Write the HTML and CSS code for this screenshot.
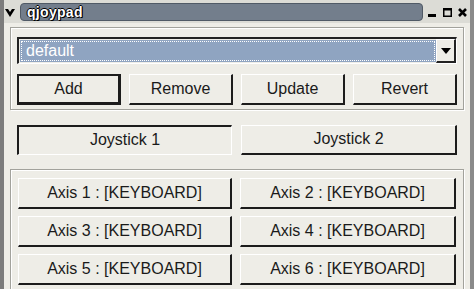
FILE: index.html
```html
<!DOCTYPE html>
<html>
<head>
<meta charset="utf-8">
<link rel="stylesheet" href="styles.css">
</head>
<body>
<div class="window">
  <div class="titlebar">
    <svg class="menu" width="10" height="10" viewBox="0 0 10 10"><path d="M0 1 L3 1 L5 4 L7 1 L10 1 L5 9 Z" fill="#000"/></svg>
    <div class="title"><span class="title-text">qjoypad</span></div>
    <div class="wbtns">
      <svg width="9" height="9" viewBox="0 0 9 9"><rect x="0" y="6" width="8" height="3" fill="#000"/></svg>
      <svg width="9" height="9" viewBox="0 0 9 9"><rect x="0.75" y="0.75" width="7.5" height="7.5" fill="none" stroke="#000" stroke-width="1.5"/><rect x="0" y="0" width="9" height="2.5" fill="#000"/></svg>
      <svg width="9" height="9" viewBox="0 0 9 9"><path d="M1 1 L8 8 M8 1 L1 8" stroke="#000" stroke-width="2.6"/></svg>
    </div>
  </div>
  <div class="content">
    <div class="frame top-frame">
      <div class="combo">
        <div class="combo-field"><span>default</span></div>
        <div class="combo-arrow"><svg width="10" height="6" viewBox="0 0 10 6"><path d="M0 0 L10 0 L5 6 Z" fill="#000"/></svg></div>
      </div>
      <div class="btn-row">
        <div class="btn default-btn">Add</div>
        <div class="btn">Remove</div>
        <div class="btn">Update</div>
        <div class="btn">Revert</div>
      </div>
    </div>
    <div class="tabs">
      <div class="btn tab pressed">Joystick 1</div>
      <div class="btn tab">Joystick 2</div>
    </div>
    <div class="frame axis-frame">
      <div class="btn axis">Axis 1 : [KEYBOARD]</div>
      <div class="btn axis">Axis 2 : [KEYBOARD]</div>
      <div class="btn axis">Axis 3 : [KEYBOARD]</div>
      <div class="btn axis">Axis 4 : [KEYBOARD]</div>
      <div class="btn axis">Axis 5 : [KEYBOARD]</div>
      <div class="btn axis">Axis 6 : [KEYBOARD]</div>
    </div>
  </div>
</div>
</body>
</html>
```
FILE: styles.css
```css
html, body {
  margin: 0;
  padding: 0;
  background: #eeede7;
}
.window {
  width: 474px;
  height: 289px;
  overflow: hidden;
  box-sizing: border-box;
  border-left: 4px solid #7c7c7c;
  border-right: 4px solid #8a8a8a;
  background: #eeede7;
  font-family: "Liberation Sans", Arial, sans-serif;
  font-size: 16px;
  color: #1a1a1a;
}
.titlebar {
  height: 23px;
  display: flex;
  align-items: center;
  background: #dcdcd6;
  padding: 0 2px 0 1px;
}
.menu {
  margin-top: 2px;
}
.title {
  flex: 1;
  height: 18px;
  margin-left: 5px;
  margin-right: 5px;
  margin-top: 1px;
  background: #737e8c;
  border-radius: 4px;
  border: 1px solid #505a66;
  box-sizing: border-box;
  display: flex;
  align-items: center;
}
.title-text {
  margin-left: 6px;
  color: #fff;
  font-weight: bold;
  font-size: 14px;
  letter-spacing: 0.3px;
  text-shadow: 1px 1px 0 #000, -1px 0 0 #000, 0 -1px 0 #000, 1px 0 0 #000;
}
.wbtns {
  display: flex;
  gap: 6px;
  align-items: center;
  margin-top: 2px;
  margin-right: 1px;
}
.content {
  padding: 4px 6px 0 6px;
}
.frame {
  border: 1px solid #a2a29c;
  box-shadow: inset 1px 1px 0 #fff, 1px 1px 0 #fff;
}
.top-frame {
  height: 83px;
  box-sizing: border-box;
  padding: 9px 6px 0 6px;
}
.combo {
  height: 27px;
  display: flex;
  box-sizing: border-box;
  border-top: 2px solid #222;
  border-left: 2px solid #222;
  border-bottom: 1px solid #fff;
  border-right: 1px solid #fff;
}
.combo-field {
  flex: 1;
  background: #8fa4c1;
  margin: 1px 0 1px 1px;
  outline: 1px dotted #fff;
  outline-offset: -2px;
  display: flex;
  align-items: center;
  color: #fff;
  padding-left: 6px;
  font-size: 16px;
}
.combo-arrow {
  width: 20px;
  display: flex;
  align-items: center;
  justify-content: center;
  background: #eeede7;
  border-top: 1px solid #fff;
  border-left: 1px solid #fff;
  border-right: 2px solid #222;
  border-bottom: 2px solid #222;
  box-sizing: border-box;
}
.btn-row {
  display: grid;
  grid-template-columns: repeat(4, 104px);
  gap: 8px;
  margin-top: 10px;
}
.btn {
  height: 31px;
  box-sizing: border-box;
  display: flex;
  align-items: center;
  justify-content: center;
  border-top: 1px solid #fff;
  border-left: 1px solid #fff;
  border-right: 2px solid #1c1c1c;
  border-bottom: 2px solid #1c1c1c;
  background: #eeede7;
  padding-bottom: 1px;
}
.default-btn {
  border: 2px solid #1c1c1c;
  border-right-width: 3px;
  border-bottom-width: 3px;
}
.tabs {
  display: grid;
  grid-template-columns: 215px 216px;
  gap: 9px;
  margin: 15px 0 0 7px;
}
.tab {
  height: 30px;
}
.tab.pressed {
  border-top: 2px solid #1c1c1c;
  border-left: 2px solid #1c1c1c;
  border-right: 1px solid #fff;
  border-bottom: 1px solid #fff;
}
.axis-frame {
  margin-top: 14px;
  border-bottom: none;
  display: grid;
  grid-template-columns: 214px 216px;
  column-gap: 8px;
  row-gap: 7px;
  padding: 8px 6px 8px 7px;
}
.axis {
  height: 31px;
}
```
